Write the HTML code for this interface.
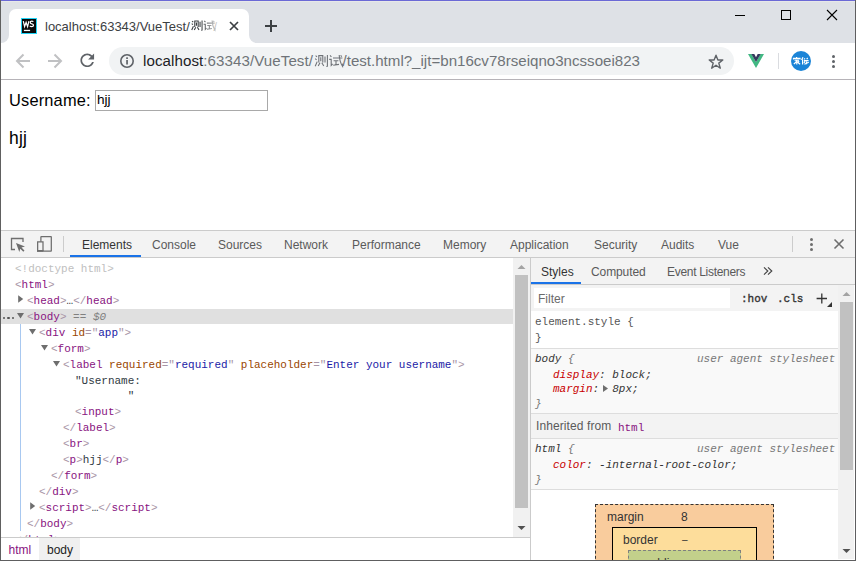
<!DOCTYPE html>
<html><head><meta charset="utf-8">
<style>
*{margin:0;padding:0;box-sizing:border-box}
html,body{width:856px;height:561px;overflow:hidden;background:#fff;font-family:"Liberation Sans",sans-serif;position:relative}
.a{position:absolute}
.mono{font-family:"Liberation Mono",monospace}
#frameT{left:1px;top:0;width:854px;height:1px;background:#6b69d6}
#frameL{left:0;top:0;width:1px;height:561px;background:#606060}
#frameR{left:855px;top:0;width:1px;height:561px;background:#5e5e60}
#frameB{left:0;top:560px;width:856px;height:1px;background:#5e5e60}
#strip{left:1px;top:1px;width:854px;height:42px;background:#dee1e6}
#tab{left:9px;top:9px;width:240px;height:35px;background:#fff;border-radius:7px 7px 0 0}
.tabfoot{top:35px;width:8px;height:8px;background:#fff}
.tabfoot i{position:absolute;left:0;top:0;width:8px;height:8px;background:#dee1e6}
#toolbar{left:1px;top:43px;width:854px;height:36px;background:#fff}
#tbline{left:1px;top:79px;width:854px;height:1px;background:#b7b7b7}
#omni{left:109px;top:47px;width:625px;height:28px;background:#f1f3f4;border-radius:14px}
.tl{font-size:13px;color:#3c4043;white-space:nowrap}
.dt{font-size:12px;color:#333;white-space:nowrap}
.code{font-family:"Liberation Mono",monospace;font-size:10.975px;line-height:16px;white-space:pre;height:16px}
.tg{color:#881280}
.tn{color:#881280}
.tb{color:#a894a6}
.at{color:#994500}
.av{color:#1a1aa6}
.gr{color:#c0c0c0}
.bk{color:#303942}
</style></head><body>
<!-- window frame / tab strip -->
<div class="a" id="strip"></div>
<div class="a" style="left:1px;top:1px;width:854px;height:1px;background:#e7e8e9"></div>
<div class="a" id="tab"></div>
<div class="a tabfoot" style="left:1px"><i style="border-bottom-right-radius:8px"></i></div>
<div class="a tabfoot" style="left:249px"><i style="border-bottom-left-radius:8px"></i></div>
<!-- ws icon -->
<svg class="a" style="left:21px;top:18px" width="16" height="16" viewBox="0 0 16 16"><rect x="0" y="0" width="16" height="16" fill="#22d3f5"/><rect x="1" y="1" width="14" height="14" fill="#0a0a0a"/><path d="M2.3 3.2L3.6 8.6L5.1 4.3L6.6 8.6L7.9 3.2" fill="none" stroke="#fff" stroke-width="1.25"/><path d="M12.4 3.7Q11.8 3.1 10.8 3.1Q9.2 3.1 9.2 4.4Q9.2 5.5 10.8 5.8Q12.5 6.1 12.5 7.3Q12.5 8.7 10.7 8.7Q9.5 8.7 8.8 7.9" fill="none" stroke="#fff" stroke-width="1.2"/><rect x="2.9" y="11.8" width="6.2" height="1.3" fill="#fff"/></svg>
<div class="a tl" style="left:45px;top:19.6px;line-height:14px;">localhost:63343/VueTest/</div>
<svg class="a" style="left:188.7px;top:18.2px" width="27.2" height="15.3" viewBox="0 0 32 18"><g fill="none" stroke="#3c4043" stroke-width="1.3"><path d="M3.6 3.6L5 4.8M3.2 6.6L4.6 7.8M3.2 14.2L5.2 9.6M6.8 10.6V3.6H10.8V10.6M8.8 5.2V9.2M8 10.8L6.2 14M9.8 10.8L11.8 14M13 4.5V10.5M15.4 3V14Q15.4 14.6 14.4 14.4"/><path d="M18 3.4L19.4 4.8M17.2 7.4H19.2V13.4L20.6 12M21 6H30.4M21.6 8.8H26.4M24 8.8V12.8M21.2 13.2L27 12.4M27.2 3Q27.6 10 30.6 14.4L30.8 11.6M28.6 3.4L29.8 4.6"/></g></svg>
<div class="a tl" style="left:213.5px;top:19.6px;line-height:14px;">/</div>
<div class="a" style="left:200px;top:14px;width:26px;height:24px;background:linear-gradient(to right,rgba(255,255,255,0),#fff 85%)"></div>
<svg class="a" style="left:228.5px;top:20.5px" width="10" height="10" viewBox="0 0 10 10"><path d="M1 1L9 9M9 1L1 9" stroke="#3c4043" stroke-width="1.7"/></svg>
<svg class="a" style="left:263px;top:18px" width="16" height="16" viewBox="0 0 16 16"><path d="M8 2V14M2 8H14" stroke="#3c4043" stroke-width="2"/></svg>
<!-- window controls -->
<div class="a" style="left:735px;top:15px;width:10px;height:1px;background:#000"></div>
<div class="a" style="left:781px;top:10px;width:10px;height:10px;border:1px solid #000"></div>
<svg class="a" style="left:826px;top:9px" width="12" height="12" viewBox="0 0 12 12"><path d="M1 1L11 11M11 1L1 11" stroke="#000" stroke-width="1.1"/></svg>

<!-- toolbar -->
<div class="a" id="toolbar"></div>
<div class="a" id="tbline" style="background:#b6b3b8"></div>
<svg class="a" style="left:15px;top:53px" width="16" height="16" viewBox="0 0 16 16"><path d="M15 8H2.5M8.5 1.5L2 8L8.5 14.5" fill="none" stroke="#c0c1c3" stroke-width="2"/></svg>
<svg class="a" style="left:47px;top:53px" width="16" height="16" viewBox="0 0 16 16"><path d="M1 8H13.5M7.5 1.5L14 8L7.5 14.5" fill="none" stroke="#c0c1c3" stroke-width="2"/></svg>
<svg class="a" style="left:76.5px;top:49.9px" width="20.5" height="20.5" viewBox="0 0 24 24"><path d="M17.65 6.35C16.2 4.9 14.21 4 12 4c-4.42 0-7.99 3.58-7.99 8s3.57 8 7.99 8c3.73 0 6.84-2.55 7.73-6h-2.08c-.82 2.33-3.04 4-5.65 4-3.31 0-6-2.690-6-6s2.69-6 6-6c1.66 0 3.14.69 4.220 1.78L13 11h7V4l-2.35 2.35z" fill="#5f6368"/></svg>
<div class="a" id="omni"></div>
<svg class="a" style="left:119px;top:53px" width="16" height="16" viewBox="0 0 16 16"><circle cx="8" cy="8" r="6.2" fill="none" stroke="#5f6368" stroke-width="1.6"/><rect x="7.2" y="7" width="1.7" height="4.5" fill="#5f6368"/><rect x="7.2" y="4.3" width="1.7" height="1.7" fill="#5f6368"/></svg>
<div class="a" style="left:143px;top:52px;font-size:15.1px;line-height:18px;white-space:nowrap;color:#6f7378;letter-spacing:0.08px"><span style="color:#202124">localhost</span>:63343/VueTest/</div>
<svg class="a" style="left:311.6px;top:52px" width="32" height="18" viewBox="0 0 32 18"><g fill="none" stroke="#6f7378" stroke-width="1.1"><path d="M3.6 3.6L5 4.8M3.2 6.6L4.6 7.8M3.2 14.2L5.2 9.6M6.8 10.6V3.6H10.8V10.6M8.8 5.2V9.2M8 10.8L6.2 14M9.8 10.8L11.8 14M13 4.5V10.5M15.4 3V14Q15.4 14.6 14.4 14.4"/><path d="M18 3.4L19.4 4.8M17.2 7.4H19.2V13.4L20.6 12M21 6H30.4M21.6 8.8H26.4M24 8.8V12.8M21.2 13.2L27 12.4M27.2 3Q27.6 10 30.6 14.4L30.8 11.6M28.6 3.4L29.8 4.6"/></g></svg>
<div class="a" style="left:342.5px;top:52px;font-size:15.1px;line-height:18px;white-space:nowrap;color:#6f7378">/test.html?_ijt=bn16cv78rseiqno3ncssoei823</div>
<svg class="a" style="left:707px;top:52.5px" width="18" height="18" viewBox="0 0 18 18"><path d="M9 2.2L10.9 7H15.8L11.8 10.1L13.3 15.2L9 12.2L4.7 15.2L6.2 10.1L2.2 7H7.1Z" fill="none" stroke="#5f6368" stroke-width="1.4" stroke-linejoin="round"/></svg>
<svg class="a" style="left:747px;top:53px" width="18" height="16" viewBox="0 0 18 16"><path d="M1 1H4.5L9 9L13.5 1H17L9 15Z" fill="#41b883"/><path d="M4.3 1H7.3L9 4.2L10.7 1H13.7L9 8.9Z" fill="#363a5e"/></svg>
<div class="a" style="left:778px;top:53px;width:1px;height:16px;background:#dadce0"></div>
<div class="a" style="left:791px;top:51px;width:20px;height:20px;border-radius:10px;background:#1b84d7"></div>
<svg class="a" style="left:788px;top:49px" width="26" height="24" viewBox="788 49 26 24"><g fill="none" stroke="#fff" stroke-width="1.2"><path d="M796.6 57V58.1M793.5 59.6V58.3H800V59.6M794.5 60.2H799M797 60.2Q796 62.5 793.8 64M797.2 61.6Q798.5 63 800.2 64.2M796.8 61V64.4M799.2 61.2L797.6 62.2"/><path d="M803 57.2L801.6 60M802.6 59.4V64.6M804.2 58.4L805 59.4M807.6 57.9L806.8 59.2M803.9 60.6H808.6M805 61.4L804 63M806.5 61.4V64.2M804.4 64.2L808.8 62.2"/></g></svg>
<div class="a" style="left:832px;top:55px;width:3px;height:3px;border-radius:2px;background:#5f6368"></div>
<div class="a" style="left:832px;top:60px;width:3px;height:3px;border-radius:2px;background:#5f6368"></div>
<div class="a" style="left:832px;top:65px;width:3px;height:3px;border-radius:2px;background:#5f6368"></div>

<!-- page -->
<div class="a" style="left:9px;top:90px;font-size:16.4px;line-height:20px;color:#000;letter-spacing:0.18px;margin-top:-0.5px">Username:</div>
<div class="a" style="left:95px;top:90px;width:173px;height:21px;border:1px solid #a9a9a9;background:#fff"></div>
<div class="a" style="left:97px;top:92px;font-size:13.6px;line-height:16px;color:#000">hjj</div>
<div class="a" style="left:9px;top:128px;font-size:17.5px;line-height:20px;color:#000;letter-spacing:0.2px">hjj</div>

<!-- devtools -->
<div class="a" style="left:1px;top:230px;width:854px;height:1px;background:#cbcbcb"></div>
<div class="a" style="left:1px;top:231px;width:854px;height:26px;background:#f3f3f3"></div>
<div class="a" style="left:1px;top:257px;width:854px;height:1px;background:#cbcbcb"></div>
<!-- inspect icon -->
<svg class="a" style="left:10px;top:237px" width="16" height="16" viewBox="0 0 16 16"><path d="M5 12.5H1.5V1.5H13V5" fill="none" stroke="#6e6e6e" stroke-width="1.3"/><path d="M6 6L15 9.5L11.5 10.5L14.5 13.5L13.3 14.7L10.3 11.7L9.3 15Z" fill="#6e6e6e"/></svg>
<svg class="a" style="left:36px;top:235px" width="18" height="18" viewBox="0 0 18 18"><path d="M4.9 6.8V1.9Q4.9 1.6 5.3 1.6H15Q15.3 1.6 15.3 1.9V15.7Q15.3 16 15 16H7.5" fill="none" stroke="#6e6e6e" stroke-width="1.25"/><path d="M1.65 6.85H7V16H1.65Z" fill="none" stroke="#6e6e6e" stroke-width="1.25"/><rect x="1" y="15" width="6.6" height="1.7" fill="#6e6e6e"/></svg>
<div class="a" style="left:63px;top:236px;width:1px;height:16px;background:#ccc"></div>
<div class="a dt" style="left:82px;top:238px;line-height:15px">Elements</div>
<div class="a" style="left:70px;top:255px;width:71px;height:2px;background:#1a73e8"></div>
<div class="a dt" style="left:152px;top:238px;line-height:15px;color:#5a5a5a">Console</div>
<div class="a dt" style="left:218px;top:238px;line-height:15px;color:#5a5a5a">Sources</div>
<div class="a dt" style="left:284px;top:238px;line-height:15px;color:#5a5a5a">Network</div>
<div class="a dt" style="left:352px;top:238px;line-height:15px;color:#5a5a5a">Performance</div>
<div class="a dt" style="left:443px;top:238px;line-height:15px;color:#5a5a5a">Memory</div>
<div class="a dt" style="left:510px;top:238px;line-height:15px;color:#5a5a5a">Application</div>
<div class="a dt" style="left:594px;top:238px;line-height:15px;color:#5a5a5a">Security</div>
<div class="a dt" style="left:661px;top:238px;line-height:15px;color:#5a5a5a">Audits</div>
<div class="a dt" style="left:718px;top:238px;line-height:15px;color:#5a5a5a">Vue</div>
<div class="a" style="left:792px;top:236px;width:1px;height:16px;background:#ccc"></div>
<div class="a" style="left:810px;top:238px;width:3px;height:3px;border-radius:2px;background:#6e6e6e"></div>
<div class="a" style="left:810px;top:243px;width:3px;height:3px;border-radius:2px;background:#6e6e6e"></div>
<div class="a" style="left:810px;top:248px;width:3px;height:3px;border-radius:2px;background:#6e6e6e"></div>
<svg class="a" style="left:833px;top:238.3px" width="12" height="12" viewBox="0 0 12 12"><path d="M1.5 1.5L10.5 10.5M10.5 1.5L1.5 10.5" stroke="#6e6e6e" stroke-width="1.6"/></svg>

<!-- elements tree -->
<div class="a" style="left:1px;top:309px;width:512px;height:15px;background:#e0e0e0"></div>
<div class="a" style="left:20px;top:324px;width:1px;height:207px;background:#a8c8f0"></div>
<div class="a code" style="left:15px;top:261px"><span class="gr">&lt;!doctype html&gt;</span></div>
<div class="a code" style="left:15px;top:277px"><span class="tb">&lt;</span><span class="tn">html</span><span class="tb">&gt;</span></div>
<div class="a code" style="left:27px;top:293px"><span class="tb">&lt;</span><span class="tn">head</span><span class="tb">&gt;</span><span class="bk">…</span><span class="tb">&lt;/</span><span class="tn">head</span><span class="tb">&gt;</span></div>
<div class="a code" style="left:27px;top:309px"><span class="tb">&lt;</span><span class="tn">body</span><span class="tb">&gt;</span><span style="color:#808080"> == <i>$0</i></span></div>
<div class="a code" style="left:39px;top:325px"><span class="tb">&lt;</span><span class="tn">div</span> <span class="at">id</span><span class="tb">="</span><span class="av">app</span><span class="tb">"&gt;</span></div>
<div class="a code" style="left:51px;top:341px"><span class="tb">&lt;</span><span class="tn">form</span><span class="tb">&gt;</span></div>
<div class="a code" style="left:63px;top:357px"><span class="tb">&lt;</span><span class="tn">label</span> <span class="at">required</span><span class="tb">="</span><span class="av">required</span><span class="tb">"</span> <span class="at">placeholder</span><span class="tb">="</span><span class="av">Enter your username</span><span class="tb">"&gt;</span></div>
<div class="a code" style="left:75px;top:373px"><span class="bk">"Username:</span></div>
<div class="a code" style="left:75px;top:388px"><span class="bk">        "</span></div>
<div class="a code" style="left:75px;top:404px"><span class="tb">&lt;</span><span class="tn">input</span><span class="tb">&gt;</span></div>
<div class="a code" style="left:63px;top:420px"><span class="tb">&lt;/</span><span class="tn">label</span><span class="tb">&gt;</span></div>
<div class="a code" style="left:63px;top:436px"><span class="tb">&lt;</span><span class="tn">br</span><span class="tb">&gt;</span></div>
<div class="a code" style="left:63px;top:452px"><span class="tb">&lt;</span><span class="tn">p</span><span class="tb">&gt;</span><span class="bk">hjj</span><span class="tb">&lt;/</span><span class="tn">p</span><span class="tb">&gt;</span></div>
<div class="a code" style="left:51px;top:468px"><span class="tb">&lt;/</span><span class="tn">form</span><span class="tb">&gt;</span></div>
<div class="a code" style="left:39px;top:484px"><span class="tb">&lt;/</span><span class="tn">div</span><span class="tb">&gt;</span></div>
<div class="a code" style="left:39px;top:500px"><span class="tb">&lt;</span><span class="tn">script</span><span class="tb">&gt;</span><span class="bk">…</span><span class="tb">&lt;/</span><span class="tn">script</span><span class="tb">&gt;</span></div>
<div class="a code" style="left:27px;top:516px"><span class="tb">&lt;/</span><span class="tn">body</span><span class="tb">&gt;</span></div>
<div class="a code" style="left:15px;top:532px;height:5px;overflow:hidden"><span class="tb">&lt;/</span><span class="tn">html</span><span class="tb">&gt;</span></div>
<!-- triangles -->
<svg class="a" style="left:17px;top:294px" width="8" height="10"><path d="M1.2 1.3L6.2 5L1.2 8.7Z" fill="#6e6e6e"/></svg>
<svg class="a" style="left:16px;top:312px" width="10" height="8"><path d="M1 1H8L4.5 6.5Z" fill="#6e6e6e"/></svg>
<svg class="a" style="left:28px;top:328px" width="10" height="8"><path d="M1 1H8L4.5 6.5Z" fill="#6e6e6e"/></svg>
<svg class="a" style="left:40px;top:344px" width="10" height="8"><path d="M1 1H8L4.5 6.5Z" fill="#6e6e6e"/></svg>
<svg class="a" style="left:52px;top:360px" width="10" height="8"><path d="M1 1H8L4.5 6.5Z" fill="#6e6e6e"/></svg>
<svg class="a" style="left:29px;top:501px" width="8" height="10"><path d="M1.2 1.3L6.2 5L1.2 8.7Z" fill="#6e6e6e"/></svg>
<div class="a" style="left:3.3px;top:316.5px;width:2.2px;height:2.2px;border-radius:50%;background:#555"></div>
<div class="a" style="left:7.4px;top:316.5px;width:2.2px;height:2.2px;border-radius:50%;background:#555"></div>
<div class="a" style="left:11.5px;top:316.5px;width:2.2px;height:2.2px;border-radius:50%;background:#555"></div>
<!-- scrollbar -->
<div class="a" style="left:513px;top:258px;width:17px;height:279px;background:#f1f1f1"></div>
<div class="a" style="left:515px;top:275px;width:13px;height:233px;background:#c1c1c1"></div>
<svg class="a" style="left:517px;top:264px" width="9" height="6"><path d="M0.5 5H8.5L4.5 1Z" fill="#a3a3a3"/></svg>
<svg class="a" style="left:517px;top:525px" width="9" height="6"><path d="M0.5 1H8.5L4.5 5Z" fill="#505050"/></svg>
<!-- breadcrumbs -->
<div class="a" style="left:1px;top:537px;width:529px;height:1px;background:#cbcbcb"></div>
<div class="a" style="left:1px;top:538px;width:529px;height:22px;background:#fff"></div>
<div class="a" style="left:39px;top:538px;width:41px;height:22px;background:#f0f0f0"></div>
<div class="a dt" style="left:8.5px;top:543px;line-height:15px;color:#881280">html</div>
<div class="a dt" style="left:47px;top:543px;line-height:15px;color:#222">body</div>

<!-- sidebar -->
<div class="a" style="left:530px;top:258px;width:1px;height:302px;background:#cbcbcb"></div>
<div class="a" style="left:531px;top:258px;width:324px;height:26px;background:#f3f3f3"></div>
<div class="a" style="left:531px;top:284px;width:324px;height:1px;background:#cbcbcb"></div>
<div class="a dt" style="left:541px;top:265px;line-height:15px">Styles</div>
<div class="a" style="left:531px;top:282px;width:50px;height:2px;background:#1a73e8"></div>
<div class="a dt" style="left:591px;top:265px;line-height:15px;color:#5a5a5a;letter-spacing:-0.1px">Computed</div>
<div class="a dt" style="left:667px;top:265px;line-height:15px;color:#5a5a5a;letter-spacing:-0.3px">Event Listeners</div>
<svg class="a" style="left:762px;top:265.3px" width="12" height="12" viewBox="0 0 12 12"><path d="M2 2.3L5.8 6L2 9.7M6 2.3L9.8 6L6 9.7" fill="none" stroke="#444" stroke-width="1.15"/></svg>
<div class="a" style="left:531px;top:285px;width:307px;height:26px;background:#f3f3f3"></div>
<div class="a" style="left:534px;top:288px;width:196px;height:20px;background:#fff"></div>
<div class="a dt" style="left:538px;top:292px;line-height:15px;color:#6a6a6a">Filter</div>
<div class="a code" style="left:741px;top:291px;color:#333;-webkit-text-stroke:0.35px #333">:hov</div>
<div class="a code" style="left:777px;top:291px;color:#333;-webkit-text-stroke:0.35px #333">.cls</div>
<svg class="a" style="left:816px;top:293px" width="12" height="12" viewBox="0 0 12 12"><path d="M5.8 0.5V10.5M0.6 5.5H11" stroke="#333" stroke-width="1.3"/></svg>
<svg class="a" style="left:827px;top:302px" width="6" height="6"><path d="M5 0V5H0Z" fill="#333"/></svg>
<!-- sidebar scrollbar -->
<div class="a" style="left:838px;top:285px;width:16px;height:274px;background:#f1f1f1"></div>
<div class="a" style="left:840px;top:302px;width:13px;height:168px;background:#c1c1c1"></div>
<svg class="a" style="left:842px;top:291px" width="9" height="6"><path d="M0.5 5H8.5L4.5 1Z" fill="#a3a3a3"/></svg>
<svg class="a" style="left:842px;top:548px" width="9" height="6"><path d="M0.5 1H8.5L4.5 5Z" fill="#505050"/></svg>
<!-- element.style -->
<div class="a" style="left:531px;top:311px;width:307px;height:37px;background:#fff"></div>
<div class="a code" style="left:535px;top:314px;color:#555">element.style {</div>
<div class="a code" style="left:535px;top:330px;color:#555">}</div>
<div class="a" style="left:531px;top:348px;width:307px;height:1px;background:#ddd"></div>
<!-- body rule -->
<div class="a" style="left:531px;top:349px;width:307px;height:64px;background:#f9f9f9"></div>
<div class="a code" style="left:535px;top:351px;color:#333"><i>body <span style="color:#777">{</span></i></div>
<div class="a code" style="left:697px;top:351px;color:#777"><i>user agent stylesheet</i></div>
<div class="a code" style="left:553px;top:367px"><i><span style="color:#c80000">display</span><span style="color:#333">: block;</span></i></div>
<div class="a code" style="left:553px;top:381px"><i><span style="color:#c80000">margin</span><span style="color:#333">:  8px;</span></i></div>
<svg class="a" style="left:602px;top:384px" width="7" height="9"><path d="M1 1L6 4.5L1 8Z" fill="#6e6e6e"/></svg>
<div class="a code" style="left:535px;top:396px;color:#777"><i>}</i></div>
<div class="a" style="left:531px;top:413px;width:307px;height:1px;background:#ddd"></div>
<!-- inherited -->
<div class="a" style="left:531px;top:414px;width:307px;height:24px;background:#f3f3f3"></div>
<div class="a dt" style="left:536px;top:419px;line-height:15px;color:#5a5a5a;letter-spacing:0.1px">Inherited from <span class="mono tg" style="font-size:11px;margin-left:3px;letter-spacing:0;position:relative;top:1px">html</span></div>
<div class="a" style="left:531px;top:438px;width:307px;height:1px;background:#ddd"></div>
<!-- html rule -->
<div class="a" style="left:531px;top:439px;width:307px;height:50px;background:#f9f9f9"></div>
<div class="a code" style="left:535px;top:441px;color:#333"><i>html <span style="color:#777">{</span></i></div>
<div class="a code" style="left:697px;top:441px;color:#777"><i>user agent stylesheet</i></div>
<div class="a code" style="left:553px;top:457px"><i><span style="color:#c80000">color</span><span style="color:#333">: -internal-root-color;</span></i></div>
<div class="a code" style="left:535px;top:472px;color:#777"><i>}</i></div>
<div class="a" style="left:531px;top:489px;width:307px;height:1px;background:#ddd"></div>
<!-- box model -->
<div class="a" style="left:595px;top:504px;width:179px;height:60px;background:#f9cc9d;border:1px dashed #333"></div>
<div class="a dt" style="left:607px;top:510px;line-height:14px">margin</div>
<div class="a dt" style="left:681px;top:510px;line-height:14px">8</div>
<div class="a" style="left:612px;top:527px;width:145px;height:40px;background:#fddd9b;border:1px solid #000"></div>
<div class="a dt" style="left:623px;top:533px;line-height:14px">border</div>
<div class="a dt" style="left:682px;top:533px;line-height:14px;font-size:10px">–</div>
<div class="a" style="left:628px;top:550px;width:113px;height:20px;background:#c3d08b;border:1px dashed #808080"></div>
<div class="a dt" style="left:640px;top:556px;line-height:14px">padding</div>

<!-- frame -->
<div class="a" id="frameT"></div>
<div class="a" id="frameL"></div>
<div class="a" id="frameR"></div>
<div class="a" id="frameB"></div>
</body></html>
